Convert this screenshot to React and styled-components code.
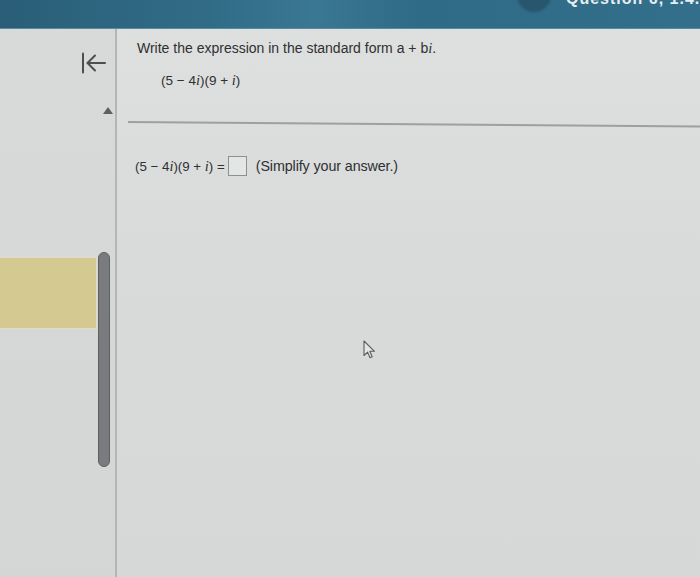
import React from "react";
import styled, { createGlobalStyle } from "styled-components";

const GlobalStyle = createGlobalStyle`
  html, body { margin: 0; padding: 0; background: #d8dada; }
  body { font-family: "Liberation Sans", Arial, sans-serif; }
  * { box-sizing: border-box; }
`;

const Page = styled.div`
  width: 700px;
  height: 577px;
  display: flex;
  flex-direction: column;
  overflow: hidden;
  position: relative;
  background: #d9dbdb;
`;

const TopBar = styled.header`
  height: 29px;
  flex: none;
  display: flex;
  align-items: flex-start;
  gap: 15px;
  padding-left: 517px;
  overflow: hidden;
  background: linear-gradient(90deg, #2a5e78 0%, #316c87 30%, #3a7793 45%, #2f6a86 60%, #336f8b 100%);
  border-bottom: 1px solid #5a8aa0;
`;

const Lens = styled.div`
  flex: none;
  width: 34px;
  height: 34px;
  margin-top: -22px;
  border-radius: 50%;
  background: #27566d;
  filter: blur(1px);
`;

const BarTitle = styled.div`
  flex: none;
  margin-top: -10px;
  color: #e6eef2;
  font-size: 16px;
  font-weight: 700;
  letter-spacing: 1px;
  white-space: nowrap;
`;

const Body = styled.div`
  flex: 1;
  display: flex;
  min-height: 0;
`;

const Sidebar = styled.aside`
  width: 117px;
  flex: none;
  position: relative;
  display: flex;
  flex-direction: column;
  background: linear-gradient(180deg, #d8d9d9 0%, #d4d6d6 100%);
  border-right: 2px solid #b3b6b6;
`;

const BackButton = styled.button`
  margin: 23px 0 0 81px;
  padding: 0;
  width: 26px;
  height: 22px;
  border: none;
  background: none;
  color: #4c4e50;
  display: flex;
`;

const UpCaret = styled.div`
  margin: 33px 0 0 103px;
  width: 0;
  height: 0;
  border-left: 5px solid transparent;
  border-right: 5px solid transparent;
  border-bottom: 7px solid #5d5f60;
`;

const Highlight = styled.div`
  margin-top: 143px;
  width: 97px;
  height: 72px;
  background: #d3c991;
  border: 1px solid #e2d9c8;
  border-left: none;
`;

const ScrollThumb = styled.div`
  position: absolute;
  top: 223px;
  left: 98px;
  width: 12px;
  height: 215px;
  border-radius: 6px;
  background: #797b7e;
  border: 1px solid #5e6063;
`;

const Main = styled.main`
  flex: 1;
  display: flex;
  flex-direction: column;
  padding-top: 10px;
  background: linear-gradient(180deg, #dedfdf 0%, #d9dbdb 40%, #d6d8d8 100%);
  color: #2e3032;
`;

const Prompt = styled.p`
  margin: 0 0 0 20px;
  font-size: 14px;
  line-height: 18px;
`;

const MathLine = styled.div`
  margin: 14px 0 0 44px;
  font-size: 13.5px;
  line-height: 18px;
`;

const I = styled.i`
  font-family: "Liberation Serif", "Times New Roman", serif;
  font-size: 14.5px;
`;

const Divider = styled.hr`
  margin: 31px 0 0 11px;
  border: none;
  height: 2px;
  background: #9d9fa0;
  transform: rotate(0.45deg);
  transform-origin: left center;
`;

const AnswerRow = styled.div`
  margin: 33px 0 0 18px;
  display: flex;
  align-items: center;
  height: 20px;
  font-size: 13.3px;
`;

const AnswerBox = styled.span`
  width: 19px;
  height: 20px;
  margin: 0 9px 0 3px;
  background: #e4e6e6;
  border: 1px solid #8d9092;
`;

const Hint = styled.span`
  font-size: 14.3px;
  letter-spacing: -0.1px;
`;

const Cursor = styled.svg`
  position: absolute;
  left: 363px;
  top: 340px;
`;

function BackIcon() {
  return (
    <svg width="26" height="22" viewBox="0 0 26 22" fill="none" stroke="currentColor" strokeWidth="2" strokeLinecap="round">
      <path d="M2 1.5v19" />
      <path d="M24 11H7" />
      <path d="M14 3.5L6.5 11 14 18.5" />
    </svg>
  );
}

export default function App() {
  return (
    <>
      <GlobalStyle />
      <Page>
        <TopBar>
          <Lens />
          <BarTitle>Question 6, 1.4.17</BarTitle>
        </TopBar>
        <Body>
          <Sidebar>
            <BackButton aria-label="Back">
              <BackIcon />
            </BackButton>
            <UpCaret />
            <Highlight />
            <ScrollThumb />
          </Sidebar>
          <Main>
            <Prompt>
              Write the expression in the standard form a + b<I>i</I>.
            </Prompt>
            <MathLine>
              (5 − 4<I>i</I>)(9 + <I>i</I>)
            </MathLine>
            <Divider />
            <AnswerRow>
              <span>
                (5 − 4<I>i</I>)(9 + <I>i</I>) =
              </span>
              <AnswerBox />
              <Hint>(Simplify your answer.)</Hint>
            </AnswerRow>
          </Main>
        </Body>
        <Cursor width="12" height="19" viewBox="0 0 12 19">
          <path d="M1 1v14.5l3.6-3.4 2.4 5.6 2.2-1-2.4-5.4H11.5z" fill="#e4e6e6" stroke="#5a5c5e" strokeWidth="1.1" strokeLinejoin="round" />
        </Cursor>
      </Page>
    </>
  );
}
